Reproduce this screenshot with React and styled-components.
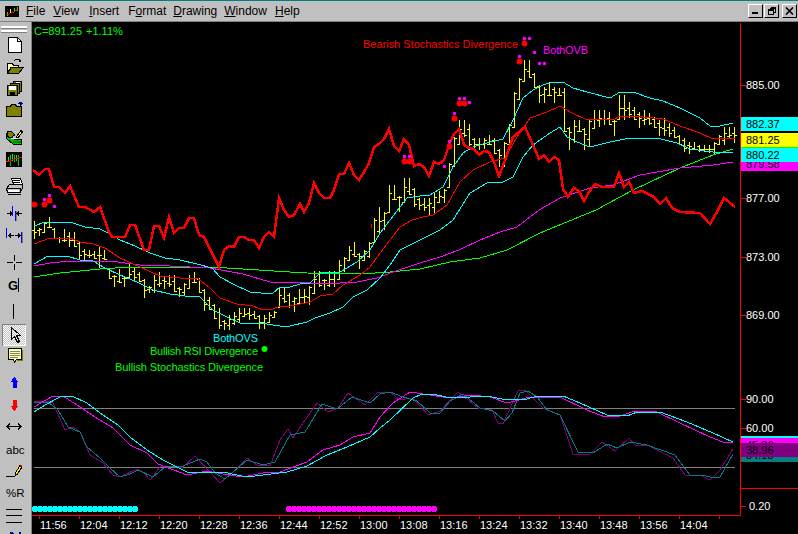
import React from 'react';
import styled, { createGlobalStyle } from 'styled-components';

const GlobalStyle = createGlobalStyle`
  html, body {
    margin: 0;
    padding: 0;
    background: #000;
  }
`;

const Page = styled.div`
  width: 798px;
  height: 534px;
  display: flex;
  flex-direction: column;
  overflow: hidden;
  background: #c0c0c0;
  font-family: "Liberation Sans", Arial, sans-serif;
  border-top: 1px solid #008080;
  box-sizing: border-box;
`;

const MenuBar = styled.div`
  height: 20px;
  flex: none;
  display: flex;
  align-items: center;
  padding: 0 1px 0 5px;
  border-bottom: 1px solid #808080;
  font-size: 12px;
  color: #000;
`;

const Logo = styled.svg`
  width: 14px;
  height: 11px;
  margin-right: 7px;
  flex: none;
`;

const MenuItem = styled.span`
  margin-right: ${props => props.$gap}px;
  & u { text-decoration: underline; }
`;

const WindowButtons = styled.div`
  margin-left: auto;
  display: flex;
  align-items: center;
`;

const WinButton = styled.div`
  width: 15px;
  height: 14px;
  margin-left: ${props => props.$gap || 0}px;
  box-sizing: border-box;
  background: #c0c0c0;
  border-top: 1px solid #fff;
  border-left: 1px solid #fff;
  border-right: 1px solid #000;
  border-bottom: 1px solid #000;
  display: flex;
  align-items: center;
  justify-content: center;
`;

const Body = styled.div`
  flex: 1;
  display: flex;
  min-height: 0;
`;

const Toolbar = styled.div`
  width: 31px;
  flex: none;
  display: flex;
  flex-direction: column;
  align-items: flex-start;
  border-right: 1px solid #808080;
  overflow: hidden;
`;

const Grip = styled.div`
  width: 26px;
  height: 2px;
  margin-left: 1px;
  margin-top: ${props => props.$top}px;
  flex: none;
  background: #fff;
  border-bottom: 1px solid #808080;
`;

const Tool = styled.div`
  width: 24px;
  height: 20px;
  flex: none;
  margin-left: 2px;
  margin-top: ${props => props.$gap}px;
  & svg { display: block; }
`;

const SelectedTool = styled(Tool)`
  background-color: #fff;
  background-image: repeating-conic-gradient(#c0c0c0 0 25%, #fff 0 50%);
  background-size: 2px 2px;
  box-shadow: inset 1px 1px 0 #808080, inset -1px -1px 0 #fff;
  height: 22px;
  margin-bottom: -2px;
  margin-left: 2px;
`;

const ChartArea = styled.div`
  position: relative;
  flex: 1;
  background: #000;
  overflow: hidden;
`;

const ChartSvg = styled.svg`
  display: block;
  shape-rendering: crispEdges;
`;

const Line = styled.polyline`
  fill: none;
  stroke: ${props => props.$color};
  stroke-width: ${props => props.$width || 1};
`;

const Dot = styled.circle`
  shape-rendering: geometricPrecision;
  fill: ${props => props.$color};
`;

const Label = styled.text`
  font-family: "Liberation Sans", Arial, sans-serif;
  font-size: 11px;
  fill: ${props => props.$color || '#fff'};
`;

const ValueTag = styled.div`
  position: absolute;
  left: 709px;
  top: ${props => props.$top - 22}px;
  width: 57px;
  height: 14px;
  line-height: 14px;
  padding-left: 5px;
  box-sizing: border-box;
  background: ${props => props.$bg};
  color: #000;
  font-size: 11px;
`;

const IconSvg = ({ children, h = 20 }) => (
  <svg width="24" height={h} viewBox={`0 0 24 ${h}`} shapeRendering="crispEdges">{children}</svg>
);

const IconText = styled.text`
  font-family: "Liberation Sans", Arial, sans-serif;
  font-size: ${props => props.$size}px;
  font-weight: ${props => props.$weight || 400};
  fill: #000;
`;

const NewDoc = () => (
  <IconSvg>
    <path d="M6.5 3.5H15.5L19.5 7.5V18.5H6.5Z" fill="#fff" stroke="#000" />
    <path d="M15.5 3.5V7.5H19.5" fill="none" stroke="#000" />
  </IconSvg>
);

const OpenFolder = () => (
  <IconSvg>
    <path d="M5.5 8.5H10.5L11.5 10.5H16.5V12.5H9L5.5 18Z" fill="#ffffb0" stroke="#000" />
    <path d="M5.5 18.5L9.5 12.5H21.5L16.5 18.5Z" fill="#808000" stroke="#000" />
    <path d="M12 6L14 4H17L18.5 6M18.5 6L17 6M18.5 6V4.5" fill="none" stroke="#000" />
  </IconSvg>
);

const SaveAll = () => (
  <IconSvg>
    <rect x="11.5" y="3.5" width="8" height="10" fill="#808000" stroke="#000" />
    <rect x="8.5" y="5.5" width="9" height="10" fill="#808000" stroke="#000" />
    <rect x="5.5" y="7.5" width="10" height="10" fill="#808000" stroke="#000" />
    <rect x="7" y="8" width="7" height="4" fill="#fff" />
    <rect x="14" y="4" width="4" height="1" fill="#fff" />
    <rect x="8" y="14" width="5" height="3" fill="#000" />
  </IconSvg>
);

const FolderUp = () => (
  <IconSvg>
    <path d="M4.5 8.5H8.5L9.5 6.5H13.5L14.5 8.5H19.5V18.5H4.5Z" fill="#808000" stroke="#000" />
    <path d="M18.5 9V5.5M16.5 5.5L18.5 4.5L20.5 6.5" fill="none" stroke="#000080" strokeWidth="1.5" />
  </IconSvg>
);

const GreenBook = () => (
  <IconSvg>
    <path d="M4.5 6.5L12.5 12.5L19.5 12.5V17.5H11.5L4.5 11.5Z" fill="#00c000" stroke="#000" />
    <path d="M5 5L9 4L13 8L8 11L5 9Z" fill="#808000" stroke="#000" />
    <path d="M14 10L19 3.5L20.5 5L16 11Z" fill="#ffff00" stroke="#000" />
    <rect x="9" y="11" width="6" height="1" fill="#fff" />
    <rect x="11" y="14" width="8" height="2" fill="#008000" />
  </IconSvg>
);

const MiniChart = () => (
  <IconSvg>
    <rect x="4" y="3" width="16" height="15" fill="#000" />
    <path d="M8.5 6V17M12.5 6V13M16.5 6V17" stroke="#00c000" fill="none" />
    <path d="M6.5 8V12M10.5 5V12M14.5 6V12" stroke="#00ff00" fill="none" />
    <path d="M4 12L7 13L10 11L13 10L16 9L20 8" stroke="#ff0000" fill="none" />
  </IconSvg>
);

const Printer = () => (
  <IconSvg>
    <path d="M9.5 2.5H18.5L20.5 8.5H11.5Z" fill="#fff" stroke="#000" />
    <path d="M10.5 4.5H17.5M11 6.5H18" stroke="#000" fill="none" />
    <path d="M7.5 8.5H20.5V11.5L18.5 16.5H5.5L4.5 12.5Z" fill="#c0c0c0" stroke="#000" />
    <path d="M5 12.5H18.5V16" stroke="#000" fill="none" />
    <rect x="6" y="14" width="11" height="2" fill="#fff" />
    <path d="M5.5 18H18.5" stroke="#000" fill="none" />
  </IconSvg>
);

const ZoomIn = () => (
  <IconSvg>
    <path d="M5 10.5H10M8 8.5L10 10.5L8 12.5" stroke="#000" fill="none" />
    <path d="M10.5 3V13" stroke="#0000ff" strokeWidth="1.2" fill="none" />
    <path d="M13.5 8V18" stroke="#0000ff" strokeWidth="1.2" fill="none" />
    <path d="M14.5 8V18" stroke="#808080" fill="none" />
    <path d="M15 10.5H20M17 8.5L15 10.5L17 12.5" stroke="#000" fill="none" />
  </IconSvg>
);

const ZoomOut = () => (
  <IconSvg>
    <path d="M4.5 3V13" stroke="#0000ff" strokeWidth="1.2" fill="none" />
    <path d="M7 10.5H12M9 8.5L7 10.5L9 12.5" stroke="#000" fill="none" />
    <path d="M13 10.5H18M16 8.5L18 10.5L16 12.5" stroke="#000" fill="none" />
    <path d="M19.5 7V18" stroke="#0000ff" strokeWidth="1.2" fill="none" />
    <path d="M20.5 7V18" stroke="#808080" fill="none" />
  </IconSvg>
);

const Crosshair = () => (
  <IconSvg>
    <path d="M5 10.5H11M14 10.5H20M12.5 3V9M12.5 12V18" stroke="#000" fill="none" />
  </IconSvg>
);

const GannLine = () => (
  <IconSvg>
    <IconText x="6" y="14" $size={13} $weight={700}>G</IconText>
    <path d="M16.5 2V16" stroke="#000" fill="none" />
  </IconSvg>
);

const VerticalLine = () => (
  <IconSvg>
    <path d="M11.5 3V18" stroke="#000" fill="none" />
  </IconSvg>
);

const Pointer = () => (
  <IconSvg h={22}>
    <path d="M9.5 3.5V15.5L12.5 12.5L15.5 18.5L17.5 17.5L14.5 11.5H18.5Z" fill="none" stroke="#000" />
  </IconSvg>
);

const Note = () => (
  <IconSvg>
    <path d="M6.5 3.5H19.5V14.5H14.5L12.5 17.5L11.5 14.5H6.5Z" fill="#ffffa0" stroke="#000" />
    <path d="M8 6.5H18M8 8.5H18M8 10.5H18M8 12.5H16" stroke="#808080" fill="none" />
    <path d="M20.5 5V15.5H15" stroke="#808000" fill="none" />
  </IconSvg>
);

const ArrowUp = () => (
  <IconSvg>
    <path d="M12.5 4L16.5 9H14.5V15H10.5V9H8.5Z" fill="#0000ff" />
  </IconSvg>
);

const ArrowDown = () => (
  <IconSvg>
    <path d="M10.5 5H14.5V11H16.5L12.5 16L8.5 11H10.5Z" fill="#ff0000" />
  </IconSvg>
);

const DoubleArrow = () => (
  <IconSvg>
    <path d="M5 10.5H19" stroke="#000" fill="none" />
    <path d="M8 7.5L5 10.5L8 13.5M16 7.5L19 10.5L16 13.5" stroke="#000" strokeWidth="1.2" fill="none" />
  </IconSvg>
);

const AbcText = () => (
  <IconSvg>
    <IconText x="4" y="15" $size={11.5}>abc</IconText>
  </IconSvg>
);

const Pen = () => (
  <IconSvg>
    <path d="M4 15.5H13" stroke="#000" fill="none" />
    <path d="M13 15L14 11L18 4.5L20 6L15.5 13Z" fill="#ffff00" stroke="#000" />
    <path d="M18 4L20 5.5" stroke="#ff0000" fill="none" />
  </IconSvg>
);

const PercentR = () => (
  <IconSvg>
    <IconText x="4" y="14" $size={11.5}>%R</IconText>
  </IconSvg>
);

const ThreeLines = () => (
  <IconSvg>
    <path d="M4 4.5H20M4 10.5H20M4 17.5H20" stroke="#000" fill="none" />
  </IconSvg>
);

const PartialIcon = () => (
  <IconSvg>
    <path d="M8.5 7V14M8.5 7L17.5 14M17.5 7V14" stroke="#000080" strokeWidth="2" fill="none" />
  </IconSvg>
);

const tools = [
  [NewDoc, 1], [OpenFolder, 1], [SaveAll, 3], [FolderUp, 0], [GreenBook, 9], [MiniChart, 2],
  [Printer, 7], [ZoomIn, 7], [ZoomOut, 2], [Crosshair, 7], [GannLine, 4], [VerticalLine, 5],
];

const tools2 = [
  [Note, 1], [ArrowUp, 8], [ArrowDown, 2], [DoubleArrow, 1], [AbcText, 3], [Pen, 2], [PercentR, 2],
  [ThreeLines, 2], [PartialIcon, 0],
];

const menu = [
  ['', 'F', 'ile', 8], ['', 'V', 'iew', 10], ['', 'I', 'nsert', 9], ['F', 'o', 'rmat', 7],
  ['', 'D', 'rawing', 7], ['', 'W', 'indow', 8], ['', 'H', 'elp', 0],
];

// high / low of each bar, 5px apart starting at x=34
const bars = [
  [221,239],[228,236],[222,233],[217,228],[228,239],[237,243],[229,242],[232,247],[232,247],[242,260],
  [249,260],[250,258],[251,259],[247,268],[250,260],[268,279],[275,287],[269,283],[277,287],[264,278],
  [267,280],[272,282],[279,298],[286,293],[275,293],[272,287],[277,289],[275,287],[275,292],[287,297],
  [283,295],[275,289],[272,283],[278,293],[289,311],[297,310],[304,319],[308,329],[320,330],[315,330],
  [312,325],[308,323],[308,317],[308,320],[311,319],[315,329],[315,329],[312,323],[311,318],[287,308],
  [287,303],[293,308],[297,312],[289,304],[289,304],[286,305],[271,294],[271,287],[279,290],[271,287],
  [271,287],[260,280],[257,272],[246,261],[242,257],[253,269],[250,261],[242,258],[218,243],[207,233],
  [212,230],[185,213],[185,200],[196,212],[178,203],[178,195],[188,207],[198,210],[198,211],[198,215],
  [192,213],[191,203],[189,203],[163,188],[137,167],[120,145],[120,137],[124,146],[138,149],[138,150],
  [138,149],[135,145],[138,154],[149,167],[142,167],[124,145],[92,128],[78,100],[60,82],[60,78],
  [73,88],[85,103],[87,103],[82,96],[87,103],[88,96],[88,132],[127,150],[120,143],[120,132],
  [128,150],[120,147],[110,129],[110,127],[110,125],[112,125],[120,136],[95,120],[95,120],[102,118],
  [107,120],[112,128],[110,125],[113,125],[117,128],[120,136],[118,136],[123,137],[127,138],[135,145],
  [138,152],[142,154],[142,150],[145,152],[145,152],[145,153],[142,155],[135,145],[127,145],[127,138],
  [127,143],
];

const clamp = (v, lo, hi) => Math.min(hi, Math.max(lo, v));
const mid = b => Math.round((b[0] + b[1]) / 2);
const barPath = bars.map((b, i) => {
  const x = 34 + i * 5;
  const next = bars[i + 1] || b;
  const prev = bars[i - 1] || b;
  const close = clamp(mid(next), b[0] + 1, b[1] - 1);
  const open = clamp(mid(prev), b[0] + 1, b[1] - 1);
  return `M${x + 0.5} ${b[0]}V${b[1]}M${x - 2} ${open + 0.5}H${x}M${x + 1} ${close + 0.5}H${x + 3}`;
}).join('');

const rsi = '33,170 39,175 45,169 49,169 54,187 59,187 65,193 70,186 79,207 85,207 94,212 100,207 109,232 112,237 125,237 130,225 135,225 144,250 149,250 154,226 159,226 164,238 169,217 174,233 179,228 184,228 189,218 194,218 199,235 204,237 219,267 224,250 229,246 234,247 239,237 244,237 249,240 254,240 259,248 264,237 269,232 274,237 279,198 284,210 289,217 294,215 300,204 304,212 309,203 314,183 319,193 324,198 330,198 334,190 339,174 344,174 349,163 354,175 359,180 364,172 369,163 374,147 379,144 384,139 389,129 394,146 399,151 404,139 409,145 414,166 419,164 424,167 429,176 434,162 439,164 444,160 449,145 454,134 459,129 464,145 469,148 474,149 479,155 484,151 489,152 494,162 499,176 504,163 513,137 525,127 533,145 539,159 544,155 549,162 554,157 559,160 563,189 568,197 574,188 579,191 584,201 589,192 595,184 602,187 614,187 619,173 624,187 629,182 634,193 642,191 654,197 660,204 666,198 672,208 680,212 700,213 710,224 717,212 724,198 735,207';
const upperBand = '34,226 45,222 70,222 85,227 100,229 110,234 120,240 135,246 150,253 165,258 180,260 197,264 212,268 220,277 233,284 250,292 272,294 280,287 290,287 300,284 310,283 320,273 340,272 357,262 370,250 380,233 390,220 400,207 407,198 420,196 430,195 443,187 453,167 463,153 473,147 490,142 503,139 513,120 523,98 533,90 543,85 553,82 563,82 573,88 587,92 610,98 620,92 633,92 650,98 663,101 680,108 700,118 710,126 720,126 733,123';
const midBand = '34,244 50,238 70,238 80,242 93,244 105,248 120,258 140,267 160,276 180,278 197,278 210,288 220,298 237,304 253,306 263,310 273,309 280,306 290,306 310,302 320,296 333,294 343,285 360,275 370,267 380,253 390,240 400,227 412,220 423,217 433,215 447,205 460,182 473,170 490,162 505,158 517,137 530,118 547,112 560,106 572,113 585,119 613,120 620,116 633,116 653,118 663,119 680,126 700,133 713,139 735,138';
const lowerBand = '34,264 48,256 67,256 80,260 93,261 105,268 120,275 137,282 153,290 170,294 185,296 200,297 213,310 227,317 240,323 260,323 280,326 290,326 307,322 315,318 330,313 343,307 353,297 367,290 380,278 390,265 400,250 420,240 440,230 453,220 470,193 487,183 503,182 513,177 523,157 533,145 550,133 560,127 567,137 577,142 590,147 610,142 630,138 657,138 677,143 690,149 713,152 733,153';
const purpleMa = '34,266 50,263 70,261 110,261 140,265 170,266 210,268 243,274 270,282 290,282 310,283 340,283 357,282 377,278 393,272 420,263 440,257 459,250 480,240 500,232 517,227 539,210 560,198 590,188 613,185 640,175 680,168 713,165 733,162';
const greenMa = '34,277 60,273 100,269 130,267 210,267 243,269 290,272 307,273 360,274 390,272 420,269 450,262 480,258 507,250 540,233 596,210 633,190 680,168 713,155 733,149';

const oscCyan = '34,412 45,405 60,397 72,396 87,403 100,413 118,425 130,437 147,450 163,460 187,472 200,473 223,472 237,475 247,477 263,475 287,472 307,466 327,455 347,447 370,437 380,428 390,420 413,398 422,394 433,394 450,398 470,397 487,396 507,400 527,399 537,396 563,396 580,403 607,415 627,416 637,412 660,412 687,422 713,433 733,442';
const oscMagenta = '34,407 53,396 63,396 77,405 95,417 113,428 130,445 147,453 158,464 187,475 207,471 223,474 243,477 263,473 280,472 307,462 323,450 340,445 353,437 370,433 380,417 393,403 410,392 423,394 450,398 472,395 490,397 507,403 530,397 560,397 587,410 605,417 620,416 635,411 657,412 680,423 710,437 723,442 733,442';
const oscPurple = '34,401 47,401 53,403 65,430 73,427 80,432 90,455 103,463 113,475 120,477 137,469 143,472 150,480 160,467 173,466 182,468 195,456 210,472 220,483 233,472 247,458 257,465 270,466 280,440 288,429 293,438 303,423 317,403 328,412 338,408 348,393 365,405 378,392 390,392 400,400 413,398 428,415 440,411 458,392 478,408 492,410 498,423 503,424 518,391 525,390 543,408 560,415 573,454 590,454 602,442 615,451 629,438 635,445 647,445 673,458 685,475 700,475 710,480 720,470 733,449';
const oscTeal = '34,403 48,402 58,410 68,427 80,432 87,447 100,458 110,468 120,477 130,474 138,470 153,477 165,467 183,466 200,459 207,462 215,473 225,479 247,460 263,465 275,462 290,435 305,432 322,404 337,409 352,397 370,403 380,394 390,392 403,397 417,401 430,413 440,413 450,401 463,394 480,408 493,411 505,421 512,413 520,393 528,391 537,397 547,410 560,415 578,452 593,453 607,444 617,448 630,442 647,445 675,455 690,475 703,475 713,478 720,477 733,454';

const redDots = [[34,204],[44,204],[49,200],[404,161],[409,161],[449,146],[454,118],[459,103],[464,103],[519,61],[524,43]];
const pinkDots = [[44,199],[49,195],[54,206],[404,156],[409,156],[449,141],[444,166],[454,113],[459,98],[464,98],[469,102],[519,56],[524,38],[529,38],[534,52],[539,63],[544,63]];

const times = ['11:56','12:04','12:12','12:20','12:28','12:36','12:44','12:52','13:00','13:08','13:16','13:24','13:32','13:40','13:48','13:56','14:04'];
const axisLabels = [['885.00',85],['877.00',198],['873.00',257],['869.00',315],['90.00',399],['60.00',428]];

// stacked in paint order: later tags cover earlier ones, as on the chart's axis
const tags = [
  { top: 157, bg: '#ff00ff', text: '879.58' },
  { top: 134, bg: '#00ff00' },
  { top: 117, bg: '#00ffff', text: '882.37' },
  { top: 133, bg: '#ffff00', text: '881.25' },
  { top: 148, bg: '#00ffff', text: '880.22' },
  { top: 436, bg: '#00ffff' },
  { top: 438, bg: '#ff00ff', text: '45.36' },
  { top: 448, bg: '#008080', text: '34.18' },
  { top: 443, bg: '#800080', text: '38.96' },
];

const range = (from, to, step) => {
  const out = [];
  for (let v = from; v <= to; v += step) out.push(v);
  return out;
};

const Chart = () => (
  <ChartSvg width="766" height="511" viewBox="32 22 766 511">
    <Label x="34" y="35" $color="#00ff00">C=891.25<tspan x="86">+1.11%</tspan></Label>

    <path d={barPath} stroke="#ffff00" fill="none" />
    <path d="M371.5 224V228" stroke="#ff0000" fill="none" />
    <Line points={greenMa} $color="#00ff00" />
    <Line points={purpleMa} $color="#ff00ff" />
    <Line points={upperBand} $color="#00ffff" />
    <Line points={midBand} $color="#ff0000" />
    <Line points={lowerBand} $color="#00ffff" />
    <Line points={rsi} $color="#ff0000" $width={2.5} />

    {redDots.map(([x, y]) => <Dot key={`${x}-${y}`} cx={x + 0.5} cy={y + 0.5} r="3" $color="#ff0000" />)}
    {pinkDots.map(([x, y]) => <Dot key={`${x}-${y}`} cx={x + 0.5} cy={y + 0.5} r="1.8" $color="#ff00ff" />)}

    <Label x="363" y="48" $color="#ff0000" textLength="155">Bearish Stochastics Divergence</Label>
    <Label x="543" y="54" $color="#ff00ff" textLength="45">BothOVB</Label>
    <Label x="213" y="342" $color="#00ffff" textLength="45">BothOVS</Label>
    <Label x="150" y="355" $color="#00ff00" textLength="108">Bullish RSI Divergence</Label>
    <Dot cx="264.5" cy="349" r="3" $color="#00ff00" />
    <Label x="115" y="371" $color="#00ff00" textLength="148">Bullish Stochastics Divergence</Label>

    <path d="M34 408.5H735M34 467.5H735" stroke="#808080" fill="none" />
    <Line points={oscPurple} $color="#800080" />
    <Line points={oscTeal} $color="#008080" />
    <Line points={oscMagenta} $color="#ff00ff" />
    <Line points={oscCyan} $color="#00ffff" />

    {range(35, 135, 5).map(x => <circle key={x} cx={x} cy="509" r="3" fill="#00ffff" />)}
    {range(289, 435, 5).map(x => <circle key={x} cx={x} cy="509" r="3" fill="#ff00ff" />)}

    <path d="M32 515.5H740.5M740.5 23V516M741 488.5H798" stroke="#ff0000" fill="none" />
    {range(0, 17, 1).map(k => (
      <path key={k} d={`M${39.5 + k * 40} 516V519`} stroke="#ff0000" fill="none" />
    ))}
    {[85, 198, 257, 315, 399, 428, 506].map(y => (
      <path key={y} d={`M741 ${y + 0.5}H746`} stroke="#ff0000" fill="none" />
    ))}
    {axisLabels.map(([text, y]) => <Label key={text} x="746" y={y + 4}>{text}</Label>)}
    <Label x="749" y="510">0.20</Label>
    {times.map((t, k) => <Label key={t} x={40 + k * 40} y="529">{t}</Label>)}
  </ChartSvg>
);

export default function App() {
  return (
    <>
      <GlobalStyle />
      <Page>
        <MenuBar>
          <Logo viewBox="0 0 14 11" shapeRendering="crispEdges">
            <rect width="14" height="11" fill="#000" />
            <path d="M2.5 6V10M9.5 2V6M12.5 1V5" stroke="#00ff00" fill="none" />
            <path d="M1 8H4L6 6H9L13 3" stroke="#ff0000" fill="none" />
            <path d="M5.5 3V7" stroke="#ffff00" fill="none" />
          </Logo>
          {menu.map(([pre, key, rest, gap]) => (
            <MenuItem key={key + rest} $gap={gap}>{pre}<u>{key}</u>{rest}</MenuItem>
          ))}
          <WindowButtons>
            <WinButton>
              <svg width="9" height="8" shapeRendering="crispEdges"><rect x="1" y="5" width="6" height="2" fill="#000" /></svg>
            </WinButton>
            <WinButton $gap={1}>
              <svg width="10" height="10" shapeRendering="crispEdges">
                <path d="M3.5 1.5H8.5V6.5H6.5M3.5 1.5V3.5M3.5 2.5H8.5" fill="none" stroke="#000" />
                <rect x="1.5" y="3.5" width="5" height="5" fill="#c0c0c0" stroke="#000" />
                <path d="M1.5 4.5H6.5" stroke="#000" />
              </svg>
            </WinButton>
            <WinButton $gap={3}>
              <svg width="9" height="8" viewBox="0 0 9 8">
                <path d="M1 0.5L8 7.5M8 0.5L1 7.5" stroke="#000" strokeWidth="1.6" fill="none" />
              </svg>
            </WinButton>
          </WindowButtons>
        </MenuBar>
        <Body>
          <Toolbar>
            <Grip $top={4} />
            <Grip $top={1} />
            {tools.map(([Icon, gap]) => (
              <Tool key={Icon.name} $gap={gap}><Icon /></Tool>
            ))}
            <SelectedTool $gap={3}><Pointer /></SelectedTool>
            {tools2.map(([Icon, gap]) => (
              <Tool key={Icon.name} $gap={gap}><Icon /></Tool>
            ))}
          </Toolbar>
          <ChartArea>
            <Chart />
            {tags.map(tag => (
              <ValueTag key={tag.top} $top={tag.top} $bg={tag.bg}>{tag.text}</ValueTag>
            ))}
          </ChartArea>
        </Body>
      </Page>
    </>
  );
}
